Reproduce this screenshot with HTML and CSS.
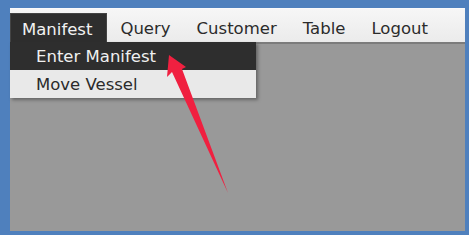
FILE: index.html
```html
<!DOCTYPE html>
<html>
  <head>
    <meta charset="utf-8">
    <title>Manifest</title>
    <link rel="stylesheet" href="styles.css">
  </head>
  <body>
    <div class="frame">
      <div class="app">
        <!-- menu bar -->
        <ul class="menubar">
          <li class="menu active">Manifest</li>
          <li class="menu">Query</li>
          <li class="menu">Customer</li>
          <li class="menu">Table</li>
          <li class="menu">Logout</li>
        </ul>

        <!-- Manifest dropdown -->
        <ul class="dropdown">
          <li class="drop-item selected">Enter Manifest</li>
          <li class="drop-item">Move Vessel</li>
        </ul>
      </div>
    </div>

    <!-- annotation arrow -->
    <svg class="arrow" width="469" height="235" viewBox="0 0 469 235">
      <polygon points="169,55 186,67 182,69 228,193 172,72 167,77" fill="#f02040"/>
    </svg>
  </body>
</html>
```

FILE: styles.css
```css
body{margin:0;padding:0;background:#4f80bd;font-family:'DejaVu Sans',Verdana,sans-serif;font-size:16.5px;line-height:1}
*{box-sizing:border-box}
ul{margin:0;padding:0;list-style:none}
.frame{padding:8px 4px 4px 10px;height:235px}
.app{position:relative;height:223px;background:#999}
.menubar{display:flex;align-items:flex-end;height:36px;border-top:1px solid #fafafa;border-bottom:2px solid #7c7c7c;
  background:linear-gradient(to bottom,#f6f6f6,#ebebeb)}
.menu{height:29px;padding:4px 13px 0;display:flex;align-items:center;color:#2b2b2b}
.menu.active{background:#2e2e2e;color:#f2f2f2;border:1px solid #444;border-bottom:0;padding:4px 14px 0 11px}
.dropdown{position:absolute;left:0;top:34px;width:246px;background:#e9e9e9;box-shadow:2px 2px 3px rgba(60,60,60,.55)}
.drop-item{height:28px;padding:3px 26px 0;display:flex;align-items:center;color:#2b2b2b}
.drop-item.selected{background:#2e2e2e;color:#f0f0f0}
.arrow{position:absolute;left:0;top:0}
```
